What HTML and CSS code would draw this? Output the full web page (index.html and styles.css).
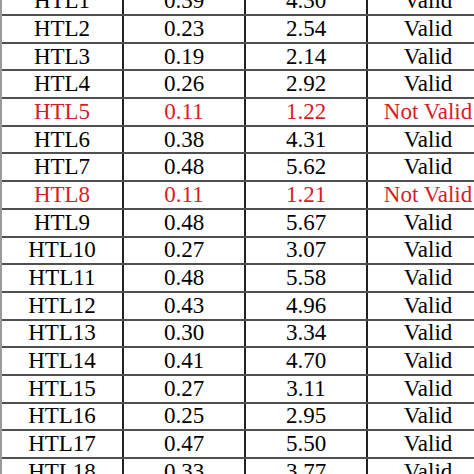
FILE: index.html
```html
<!DOCTYPE html>
<html>
<head>
<meta charset="utf-8">
<link rel="stylesheet" href="styles.css">
</head>
<body>
<div class="table">
  <div class="row"><div class="cell">HTL1</div><div class="cell">0.39</div><div class="cell">4.30</div><div class="cell">Valid</div></div>
  <div class="row"><div class="cell">HTL2</div><div class="cell">0.23</div><div class="cell">2.54</div><div class="cell">Valid</div></div>
  <div class="row"><div class="cell">HTL3</div><div class="cell">0.19</div><div class="cell">2.14</div><div class="cell">Valid</div></div>
  <div class="row"><div class="cell">HTL4</div><div class="cell">0.26</div><div class="cell">2.92</div><div class="cell">Valid</div></div>
  <div class="row invalid"><div class="cell">HTL5</div><div class="cell">0.11</div><div class="cell">1.22</div><div class="cell">Not Valid</div></div>
  <div class="row"><div class="cell">HTL6</div><div class="cell">0.38</div><div class="cell">4.31</div><div class="cell">Valid</div></div>
  <div class="row"><div class="cell">HTL7</div><div class="cell">0.48</div><div class="cell">5.62</div><div class="cell">Valid</div></div>
  <div class="row invalid"><div class="cell">HTL8</div><div class="cell">0.11</div><div class="cell">1.21</div><div class="cell">Not Valid</div></div>
  <div class="row"><div class="cell">HTL9</div><div class="cell">0.48</div><div class="cell">5.67</div><div class="cell">Valid</div></div>
  <div class="row"><div class="cell">HTL10</div><div class="cell">0.27</div><div class="cell">3.07</div><div class="cell">Valid</div></div>
  <div class="row"><div class="cell">HTL11</div><div class="cell">0.48</div><div class="cell">5.58</div><div class="cell">Valid</div></div>
  <div class="row"><div class="cell">HTL12</div><div class="cell">0.43</div><div class="cell">4.96</div><div class="cell">Valid</div></div>
  <div class="row"><div class="cell">HTL13</div><div class="cell">0.30</div><div class="cell">3.34</div><div class="cell">Valid</div></div>
  <div class="row"><div class="cell">HTL14</div><div class="cell">0.41</div><div class="cell">4.70</div><div class="cell">Valid</div></div>
  <div class="row"><div class="cell">HTL15</div><div class="cell">0.27</div><div class="cell">3.11</div><div class="cell">Valid</div></div>
  <div class="row"><div class="cell">HTL16</div><div class="cell">0.25</div><div class="cell">2.95</div><div class="cell">Valid</div></div>
  <div class="row"><div class="cell">HTL17</div><div class="cell">0.47</div><div class="cell">5.50</div><div class="cell">Valid</div></div>
  <div class="row"><div class="cell">HTL18</div><div class="cell">0.33</div><div class="cell">3.77</div><div class="cell">Valid</div></div>
</div>
</body>
</html>
```

FILE: styles.css
```css
html, body {
  margin: 0;
  padding: 0;
  background: #ffffff;
  overflow: hidden;
  width: 474px;
  height: 474px;
}

.table {
  margin-top: -11.7px;
  width: 490px;
  border-left: 2px solid #9a9a9a;
  font-family: "Liberation Serif", "Times New Roman", serif;
  font-size: 23px;
  color: #000000;
}

.row {
  display: grid;
  grid-template-columns: 122px 122px 122px 122px;
  height: 27.69px;
  box-sizing: border-box;
  border-bottom: 2px solid #505050;
}

.cell {
  display: flex;
  align-items: center;
  justify-content: center;
  box-sizing: border-box;
  border-right: 2px solid #222222;
  padding-bottom: 1px;
  line-height: 1;
  white-space: nowrap;
}

.invalid {
  color: #d81c27;
}
```
